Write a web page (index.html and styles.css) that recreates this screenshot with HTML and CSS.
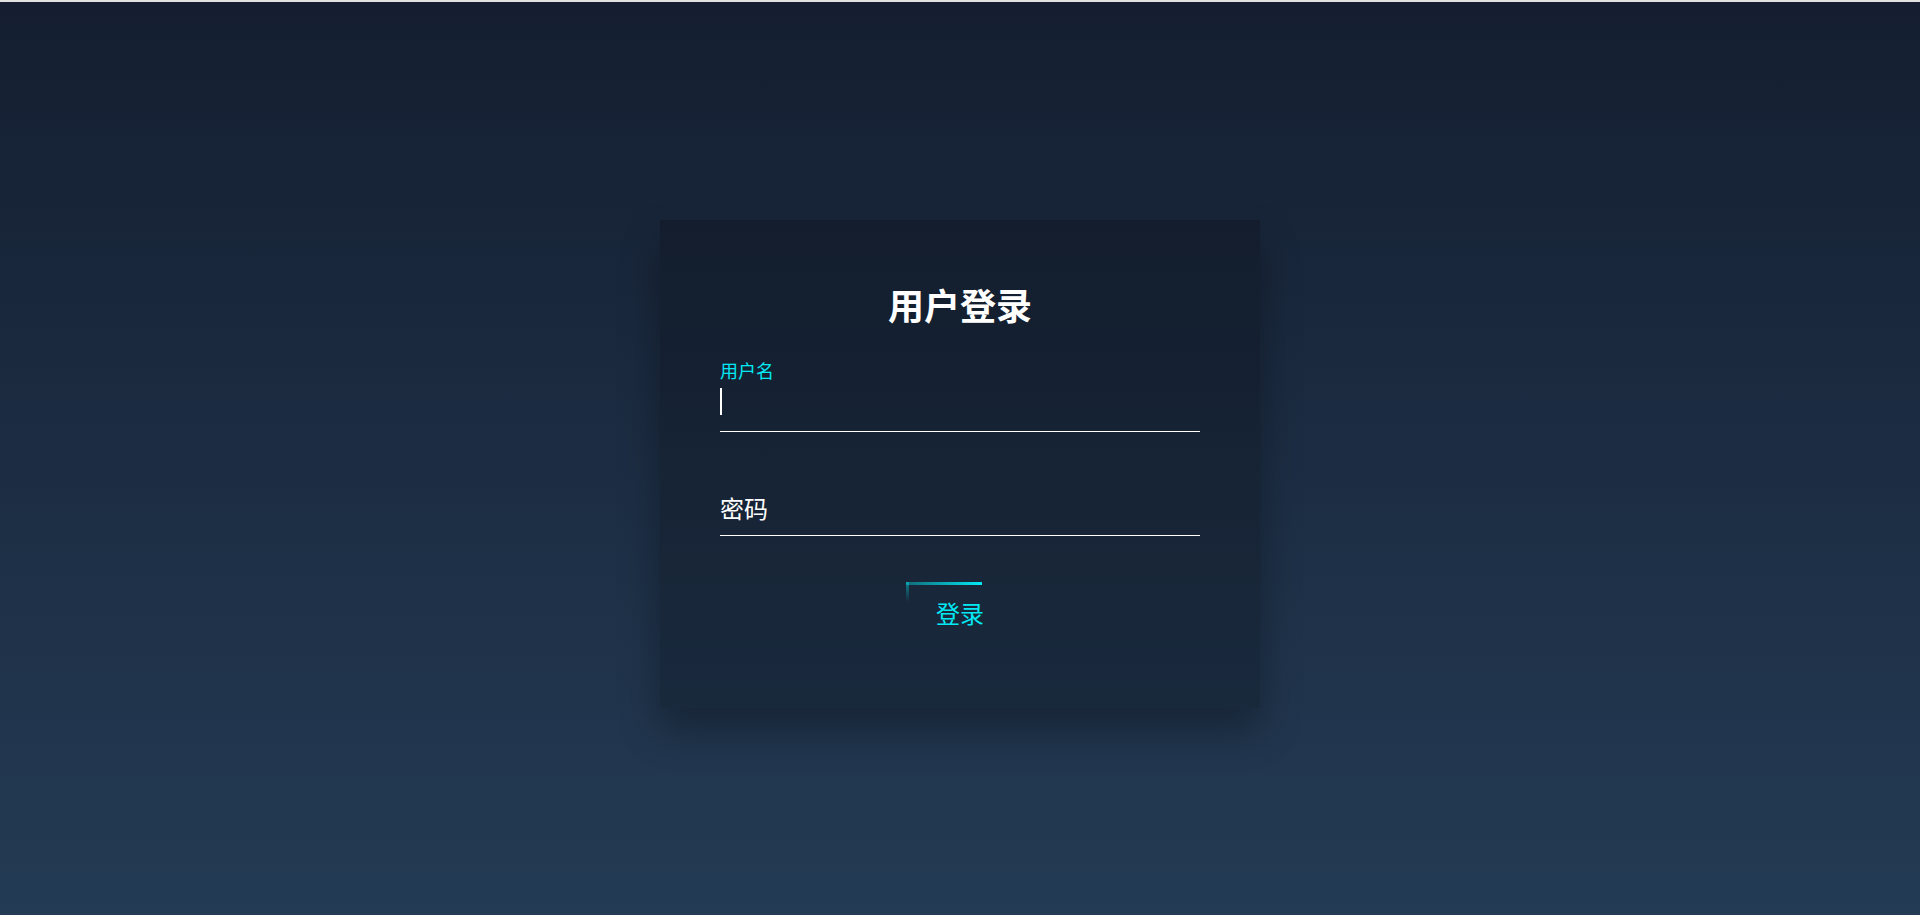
FILE: index.html
```html
<!DOCTYPE html>
<html lang="zh-CN">
<head>
<meta charset="utf-8">
<title>用户登录</title>
<link rel="stylesheet" href="styles.css">
</head>
<body>
<div class="page">
  <div class="login-box">
    <h2 class="title">用户登录</h2>
    <form class="login-form">
      <div class="user-box">
        <input class="field" type="text" required>
        <label class="field-label field-label-active">用户名</label>
        <span class="caret"></span>
      </div>
      <div class="user-box">
        <input class="field" type="password" required>
        <label class="field-label">密码</label>
      </div>
      <div class="actions">
        <a href="#" class="btn"><span class="line-top"></span><span class="line-left"></span>登录</a>
      </div>
    </form>
  </div>
</div>
</body>
</html>
```

FILE: styles.css
```css
html {
  background: #ffffff;
}
body {
  margin: 0;
  font-family: "Noto Sans CJK SC", "Noto Sans", sans-serif;
}
.page {
  box-sizing: border-box;
  min-height: 100vh;
  border-top: 2px solid #e2e2e2;
  padding-top: 10px;
  display: flex;
  align-items: center;
  justify-content: center;
  background: linear-gradient(#141e30, #243b55);
}
.login-box {
  box-sizing: border-box;
  width: 600px;
  padding: 60px 60px 59px;
  background: rgba(0, 0, 0, 0.2);
  box-shadow: 0 22px 38px rgba(0, 0, 0, 0.3);
}
.title {
  margin: 0 0 45px;
  padding: 0;
  color: #ffffff;
  text-align: center;
  font-size: 36px;
  line-height: 48px;
  font-weight: 700;
}
.login-form {
  margin: 0;
}
.user-box {
  position: relative;
}
.field {
  display: block;
  box-sizing: content-box;
  width: 100%;
  height: 28px;
  padding: 15px 0;
  margin: 0 0 45px;
  font-size: 24px;
  line-height: 28px;
  font-family: "Liberation Sans", sans-serif;
  color: #ffffff;
  border: none;
  border-bottom: 1px solid #ffffff;
  outline: none;
  background: transparent;
}
.field-label {
  position: absolute;
  top: 0;
  left: 0;
  padding: 15px 0;
  font-size: 24px;
  line-height: 32px;
  color: #ffffff;
  pointer-events: none;
}
.field-label-active {
  top: -30px;
  font-size: 18px;
  line-height: 24px;
  color: #03e9f4;
}
.caret {
  position: absolute;
  left: 0;
  top: 15px;
  width: 2px;
  height: 27px;
  background: #ffffff;
}
.actions {
  padding-top: 1px;
  text-align: center;
}
.btn {
  position: relative;
  display: inline-block;
  padding: 15px 30px;
  font-size: 24px;
  line-height: 32px;
  color: #03e9f4;
  text-decoration: none;
  overflow: hidden;
}
.line-top {
  position: absolute;
  top: 0;
  left: 0;
  width: 76px;
  height: 3px;
  background: linear-gradient(90deg, rgba(3, 233, 244, 0.35), #03e9f4);
}
.line-left {
  position: absolute;
  top: 0;
  left: 0;
  width: 3px;
  height: 20px;
  background: linear-gradient(180deg, rgba(3, 233, 244, 0.45), rgba(3, 233, 244, 0));
}
```
